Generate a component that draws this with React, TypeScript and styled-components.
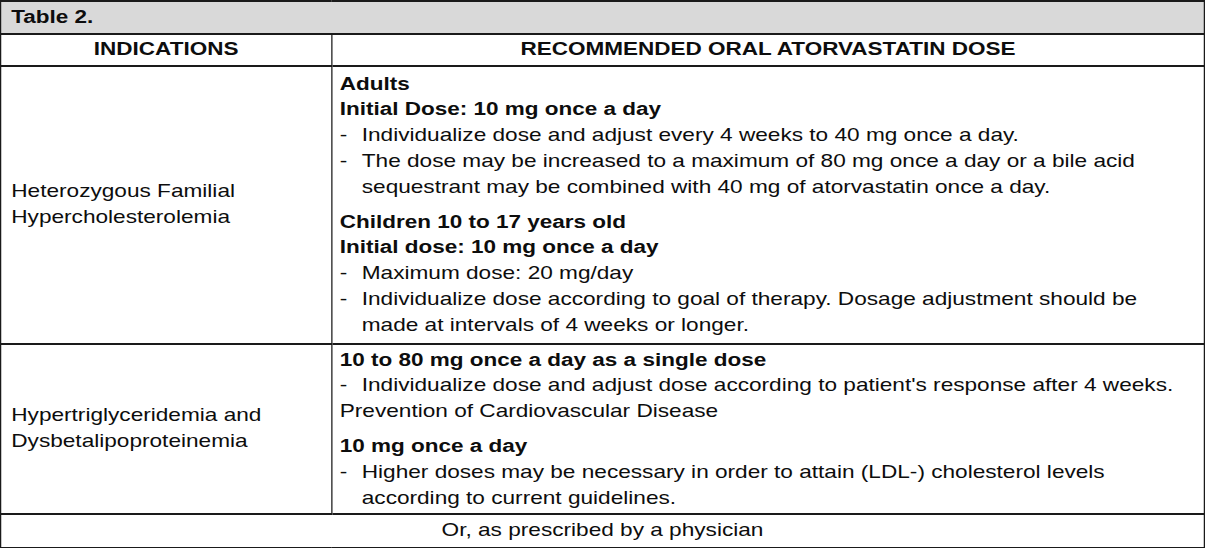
import styled, { createGlobalStyle } from "styled-components";

const GlobalStyle = createGlobalStyle`
  html, body {
    margin: 0;
    padding: 0;
    background: #ffffff;
  }
`;

// the source table is a horizontally stretched print scan, so we lay it out
// at its natural width and widen it once
const STRETCH = 1.25;

const Frame = styled.div`
  width: 1205px;
  height: 548px;
  overflow: hidden;
  background: #ffffff;
`;

const Stretch = styled.div`
  width: ${1205 / STRETCH}px;
  transform: scaleX(${STRETCH});
  transform-origin: 0 0;
`;

const Table = styled.table`
  width: 100%;
  border-collapse: collapse;
  table-layout: fixed;
  font-family: "Liberation Sans", Arial, Helvetica, sans-serif;
  font-size: 18.1px;
  line-height: 25.8px;
  color: #0d0d0d;
`;

const Cell = styled.td`
  border-style: solid;
  border-color: #1a1a1a;
  border-width: 2px 1.6px;
  padding: 3px 7px;
  text-align: left;
  font-weight: 400;
  vertical-align: middle;
`;

const TitleCell = styled(Cell)`
  background: #d9d9d9;
  font-weight: 700;
  font-size: 18px;
  padding: 3px 8px 2px;
`;

const HeadCell = styled(Cell)`
  text-align: center;
  font-weight: 700;
  font-size: 18px;
  padding: 2px 6px 2px;
`;

const IndicationCell = styled(Cell)`
  padding-left: 8px;
`;

const DoseCell = styled(Cell)<{ $tight?: boolean }>`
  vertical-align: top;
  padding: ${(p) => (p.$tight ? "3px 6px 2px" : "5px 6px 4px")};
`;

const Block = styled.div`
  & + & {
    margin-top: 9px;
  }
`;

const Strong = styled.div`
  font-weight: 700;
  font-size: 18px;
`;

const Plain = styled.div``;

const Item = styled.div`
  display: flex;
`;

const Dash = styled.span`
  width: 17.6px;
  flex-shrink: 0;
`;

const FootCell = styled(Cell)`
  text-align: center;
  padding: 3px 6px 3px;
`;

function Bullet({ children }: { children: React.ReactNode }) {
  return (
    <Item>
      <Dash>-</Dash>
      <span>{children}</span>
    </Item>
  );
}

export default function App() {
  return (
    <Frame>
      <GlobalStyle />
      <Stretch>
        <Table>
          <colgroup>
            <col style={{ width: `${331 / STRETCH}px` }} />
            <col />
          </colgroup>
          <tbody>
            <tr>
              <TitleCell colSpan={2}>Table 2.</TitleCell>
            </tr>
            <tr>
              <HeadCell>INDICATIONS</HeadCell>
              <HeadCell>RECOMMENDED ORAL ATORVASTATIN DOSE</HeadCell>
            </tr>
            <tr>
              <IndicationCell>
                Heterozygous Familial
                <br />
                Hypercholesterolemia
              </IndicationCell>
              <DoseCell>
                <Block>
                  <Strong>Adults</Strong>
                  <Strong>Initial Dose: 10 mg once a day</Strong>
                  <Bullet>
                    Individualize dose and adjust every 4 weeks to 40 mg once a
                    day.
                  </Bullet>
                  <Bullet>
                    The dose may be increased to a maximum of 80 mg once a day or
                    a bile acid
                    <br />
                    sequestrant may be combined with 40 mg of atorvastatin once a
                    day.
                  </Bullet>
                </Block>
                <Block>
                  <Strong>Children 10 to 17 years old</Strong>
                  <Strong>Initial dose: 10 mg once a day</Strong>
                  <Bullet>Maximum dose: 20 mg/day</Bullet>
                  <Bullet>
                    Individualize dose according to goal of therapy. Dosage
                    adjustment should be
                    <br />
                    made at intervals of 4 weeks or longer.
                  </Bullet>
                </Block>
              </DoseCell>
            </tr>
            <tr>
              <IndicationCell>
                Hypertriglyceridemia and
                <br />
                Dysbetalipoproteinemia
              </IndicationCell>
              <DoseCell $tight>
                <Block>
                  <Strong>10 to 80 mg once a day as a single dose</Strong>
                  <Bullet>
                    Individualize dose and adjust dose according to patient's
                    response after 4 weeks.
                  </Bullet>
                  <Plain>Prevention of Cardiovascular Disease</Plain>
                </Block>
                <Block>
                  <Strong>10 mg once a day</Strong>
                  <Bullet>
                    Higher doses may be necessary in order to attain (LDL-)
                    cholesterol levels
                    <br />
                    according to current guidelines.
                  </Bullet>
                </Block>
              </DoseCell>
            </tr>
            <tr>
              <FootCell colSpan={2}>Or, as prescribed by a physician</FootCell>
            </tr>
          </tbody>
        </Table>
      </Stretch>
    </Frame>
  );
}
